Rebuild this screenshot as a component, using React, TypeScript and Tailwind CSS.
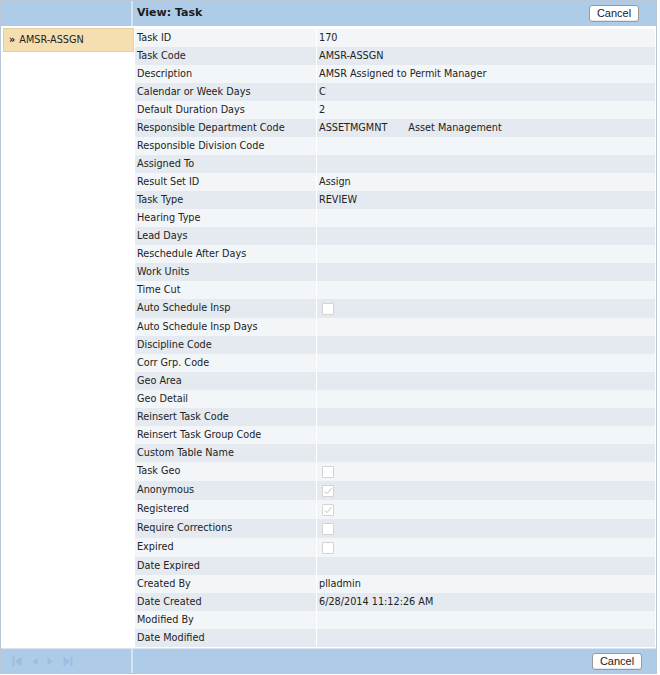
import React from "react";

type Row = { label: string; value?: string; extra?: string; check?: "empty" | "checked" };

const rows: Row[] = [
  { label: "Task ID", value: "170" },
  { label: "Task Code", value: "AMSR-ASSGN" },
  { label: "Description", value: "AMSR Assigned to Permit Manager" },
  { label: "Calendar or Week Days", value: "C" },
  { label: "Default Duration Days", value: "2" },
  { label: "Responsible Department Code", value: "ASSETMGMNT", extra: "Asset Management" },
  { label: "Responsible Division Code" },
  { label: "Assigned To" },
  { label: "Result Set ID", value: "Assign" },
  { label: "Task Type", value: "REVIEW" },
  { label: "Hearing Type" },
  { label: "Lead Days" },
  { label: "Reschedule After Days" },
  { label: "Work Units" },
  { label: "Time Cut" },
  { label: "Auto Schedule Insp", check: "empty" },
  { label: "Auto Schedule Insp Days" },
  { label: "Discipline Code" },
  { label: "Corr Grp. Code" },
  { label: "Geo Area" },
  { label: "Geo Detail" },
  { label: "Reinsert Task Code" },
  { label: "Reinsert Task Group Code" },
  { label: "Custom Table Name" },
  { label: "Task Geo", check: "empty" },
  { label: "Anonymous", check: "checked" },
  { label: "Registered", check: "checked" },
  { label: "Require Corrections", check: "empty" },
  { label: "Expired", check: "empty" },
  { label: "Date Expired" },
  { label: "Created By", value: "plladmin" },
  { label: "Date Created", value: "6/28/2014 11:12:26 AM" },
  { label: "Modified By" },
  { label: "Date Modified" },
];

function Checkbox({ checked }: { checked: boolean }) {
  return (
    <div className="w-[12px] h-[12px] border border-[#d4d4d4] bg-white rounded-[1px] flex items-center justify-center">
      {checked && (
        <svg width="10" height="10" viewBox="0 0 10 10">
          <path d="M1.5 5.2 L4 7.6 L8.6 2.2" fill="none" stroke="#c4c4c4" strokeWidth="1" />
        </svg>
      )}
    </div>
  );
}

function CancelButton() {
  return (
    <button className="w-[50px] h-[17px] bg-white border border-[#9a9a9a] rounded-[3px] text-[11px] leading-none text-[#222] font-['Liberation_Sans',sans-serif] flex items-center justify-center shadow-[inset_0_-1px_0_#e8e8e8]">
      Cancel
    </button>
  );
}

function NavIcons() {
  const c = "#9cbde2";
  return (
    <div className="flex items-center h-full pl-[11px]">
      <svg width="10" height="11" viewBox="0 0 10 11">
        <rect x="0.5" y="0.5" width="2" height="10" fill={c} />
        <path d="M9.5 0.5 L3 5.5 L9.5 10.5 Z" fill={c} />
      </svg>
      <svg width="6" height="11" viewBox="0 0 6 11" className="ml-[10px]">
        <path d="M5.5 1.5 L0.5 5.5 L5.5 9.5 Z" fill={c} />
      </svg>
      <svg width="6" height="11" viewBox="0 0 6 11" className="ml-[9px]">
        <path d="M0.5 1.5 L5.5 5.5 L0.5 9.5 Z" fill={c} />
      </svg>
      <svg width="10" height="11" viewBox="0 0 10 11" className="ml-[10px]">
        <path d="M0.5 0.5 L7 5.5 L0.5 10.5 Z" fill={c} />
        <rect x="7.5" y="0.5" width="2" height="10" fill={c} />
      </svg>
    </div>
  );
}

export default function App() {
  return (
    <div className="w-[660px] h-[675px] bg-white font-['DejaVu_Sans',Verdana,sans-serif] text-[#222]">
      <div className="w-[657px] h-[674px] border border-[#b9c7d6] flex flex-col bg-white">
        {/* Header */}
        <div className="flex h-[26px] bg-[#aecbe8] border-b border-white">
          <div className="w-[132px] border-r-2 border-[#d6e4f3]" />
          <div className="flex-1 flex items-center justify-between pl-[4px] pr-[17px]">
            <span className="text-[11px] font-bold text-[#1c1c1c]">View: Task</span>
            <CancelButton />
          </div>
        </div>
        {/* Body */}
        <div className="flex flex-1 min-h-0">
          <div className="w-[134px] pt-[1px] pl-[2px] pr-[1px]">
            <div className="h-[24px] bg-[#f5dfb0] border border-[#e2cfa4] flex items-center pl-[5px] text-[9.7px] text-[#222]">
              <span className="mr-[4px] font-bold">»</span>AMSR-ASSGN
            </div>
          </div>
          <div className="flex-1 pt-[2px] pr-[1px]">
            {rows.map((r, i) => (
              <div
                key={r.label}
                className={`flex text-[9.7px] ${r.check ? "h-[19px]" : "h-[18px]"} ${
                  i % 2 === 0 ? "bg-[#f3f6f9]" : "bg-[#e5eaf0]"
                }`}
              >
                <div className="w-[182px] pl-[2px] flex items-center border-r border-white whitespace-nowrap">
                  {r.label}
                </div>
                <div className="flex-1 pl-[2px] flex items-center whitespace-nowrap">
                  {r.check ? (
                    <div className="pl-[3px]">
                      <Checkbox checked={r.check === "checked"} />
                    </div>
                  ) : (
                    <>
                      <span>{r.value}</span>
                      {r.extra && <span className="ml-[21px]">{r.extra}</span>}
                    </>
                  )}
                </div>
              </div>
            ))}
          </div>
        </div>
        {/* Footer */}
        <div className="flex h-[25px] bg-[#aecbe8] border-t border-[#d6e4f3]">
          <div className="w-[132px] border-r-2 border-[#d6e4f3]">
            <NavIcons />
          </div>
          <div className="flex-1 flex items-center justify-end pr-[14px]">
            <CancelButton />
          </div>
        </div>
      </div>
    </div>
  );
}
